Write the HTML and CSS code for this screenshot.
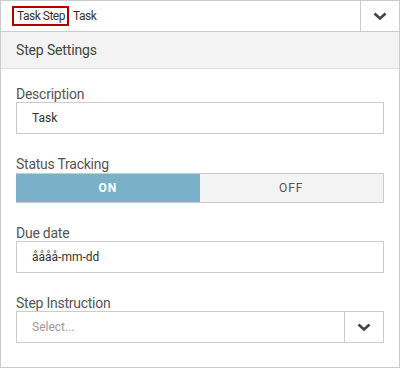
FILE: index.html
```html
<!DOCTYPE html>
<html lang="en">
<head>
  <meta charset="UTF-8" />
  <meta name="viewport" content="width=device-width, initial-scale=1.0"/>
  <title>Step Settings</title>
  <link rel="stylesheet" href="styles.css">
</head>
<body>
  <div class="panel">
    <div class="header">
      <div class="header-title">
        <span class="tag">Task Step</span>
        <span class="name">Task</span>
      </div>
      <div class="arrow-box">
        <svg width="14" height="9" viewBox="0 0 14 9"><path d="M1.5 1.5 L7 6.5 L12.5 1.5" fill="none" stroke="#444" stroke-width="2.6"/></svg>
      </div>
    </div>

    <div class="band">Step Settings</div>

    <div class="content">
      <div class="field first">
        <label>Description</label>
        <div class="input">Task</div>
      </div>

      <div class="field">
        <label>Status Tracking</label>
        <div class="toggle">
          <div class="toggle-on">ON</div>
          <div class="toggle-off">OFF</div>
        </div>
      </div>

      <div class="field">
        <label>Due date</label>
        <div class="input">åååå-mm-dd</div>
      </div>

      <div class="field">
        <label>Step Instruction</label>
        <div class="select">
          <div class="select-text">Select...</div>
          <div class="select-arrow">
            <svg width="14" height="9" viewBox="0 0 14 9"><path d="M1.5 1.5 L7 6.5 L12.5 1.5" fill="none" stroke="#444" stroke-width="2.6"/></svg>
          </div>
        </div>
      </div>
    </div>
  </div>
</body>
</html>
```

FILE: styles.css
```css
body {
  margin: 0;
  padding: 0;
  font-family: Roboto, 'Liberation Sans', sans-serif;
  background: white;
}

.panel {
  width: 400px;
  height: 368px;
  box-sizing: border-box;
  border: 1px solid #cccccc;
  background: white;
}

.header {
  display: flex;
  height: 30px;
  border-bottom: 1px solid #cccccc;
}

.header-title {
  flex: 1;
  display: flex;
  align-items: center;
  padding-left: 11px;
  font-size: 12px;
  letter-spacing: -0.5px;
  color: #333;
}

.tag {
  border: 2px solid #b00000;
  padding: 1px 2px 1px 3px;
  line-height: 14px;
  margin-right: 4px;
}

.arrow-box {
  width: 38px;
  border-left: 1px solid #cccccc;
  display: flex;
  align-items: center;
  justify-content: center;
}

.band {
  height: 36px;
  line-height: 36px;
  background: #f3f3f3;
  border-bottom: 1px solid #dddddd;
  padding-left: 15px;
  font-size: 14px;
  letter-spacing: -0.15px;
  color: #444;
}

.content {
  padding: 17px 15px 0 15px;
}

.field {
  margin-top: 22px;
}

.field.first {
  margin-top: 0;
}

.field label {
  display: block;
  font-size: 14px;
  line-height: 16px;
  letter-spacing: -0.25px;
  color: #555;
}

.input {
  height: 30px;
  line-height: 30px;
  border: 1px solid #cccccc;
  padding-left: 15px;
  font-size: 12px;
  color: #333;
}

.toggle {
  display: flex;
  margin-top: 1px;
  height: 28px;
  border-top: 1px solid #cccccc;
  border-bottom: 1px solid #cccccc;
  font-size: 12px;
  letter-spacing: 1px;
}

.toggle-on {
  flex: 1;
  background: #7ab1c8;
  color: white;
  font-weight: bold;
  text-align: center;
  line-height: 28px;
}

.toggle-off {
  flex: 1;
  background: #f3f3f3;
  color: #555;
  text-align: center;
  line-height: 28px;
  border-right: 1px solid #cccccc;
}

.select {
  display: flex;
  height: 30px;
  border: 1px solid #cccccc;
}

.select-text {
  flex: 1;
  line-height: 30px;
  padding-left: 15px;
  font-size: 12px;
  color: #999;
}

.select-arrow {
  width: 38px;
  border-left: 1px solid #cccccc;
  display: flex;
  align-items: center;
  justify-content: center;
}
```
